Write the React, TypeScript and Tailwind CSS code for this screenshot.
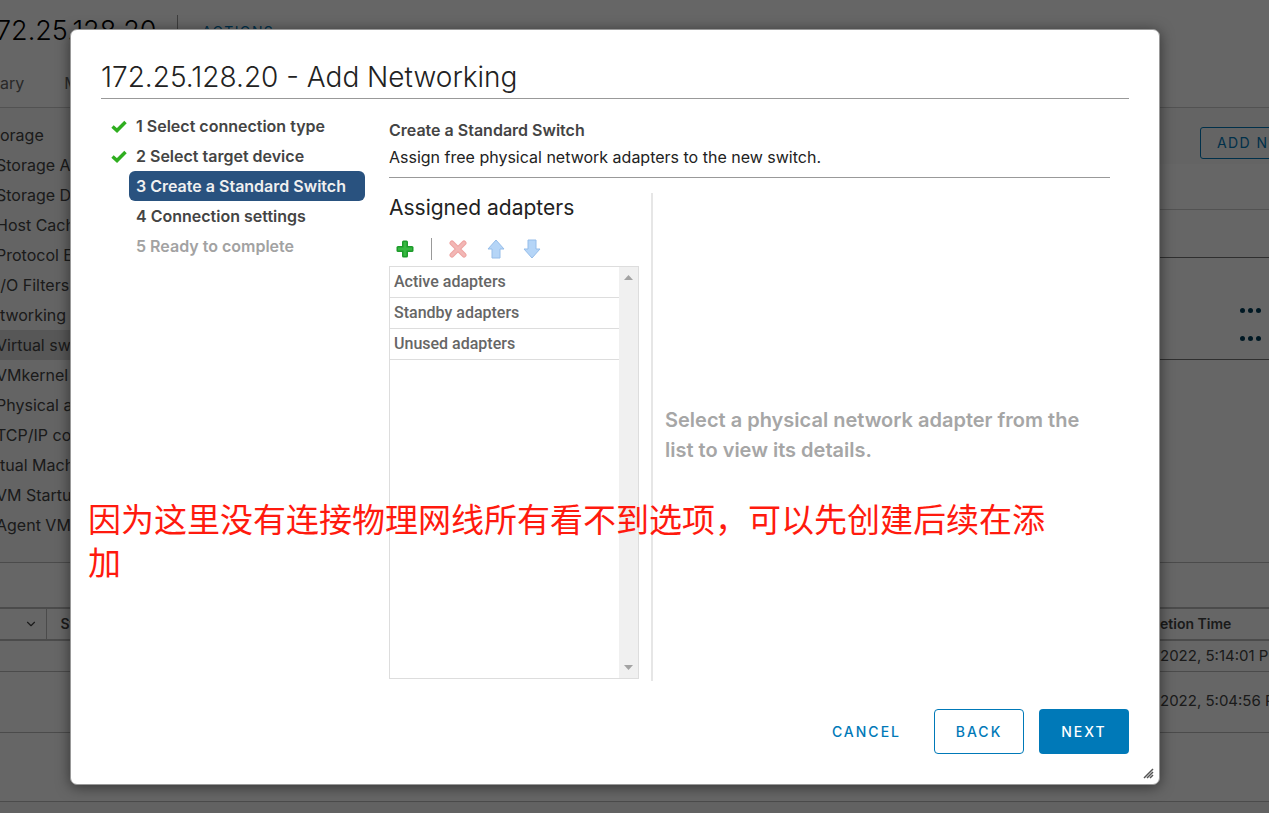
import { ChevronDown } from 'lucide-react'

const navItems = [
  { label: 'orage', group: true },
  { label: 'Storage Adapters' },
  { label: 'Storage Devices' },
  { label: 'Host Cache Configuration' },
  { label: 'Protocol Endpoints' },
  { label: 'I/O Filters' },
  { label: 'tworking', group: true },
  { label: 'Virtual switches', active: true },
  { label: 'VMkernel adapters' },
  { label: 'Physical adapters' },
  { label: 'TCP/IP configuration' },
  { label: 'tual Machines', group: true },
  { label: 'VM Startup/Shutdown' },
  { label: 'Agent VM Settings' },
]

const steps = [
  { label: '1 Select connection type', state: 'done' },
  { label: '2 Select target device', state: 'done' },
  { label: '3 Create a Standard Switch', state: 'current' },
  { label: '4 Connection settings', state: 'next' },
  { label: '5 Ready to complete', state: 'disabled' },
]

const stepStyles: Record<string, string> = {
  done: 'text-[#444]',
  current: 'bg-[#29527f] text-[#f0f0f0]',
  next: 'text-[#444]',
  disabled: 'text-[#a2a2a2]',
}

const adapterGroups = ['Active adapters', 'Standby adapters', 'Unused adapters']

function MoreButton() {
  return (
    <button aria-label="More actions" className="flex h-7 items-center gap-[3px]">
      <span className="size-[5px] rounded-full bg-[#003d59]" />
      <span className="size-[5px] rounded-full bg-[#003d59]" />
      <span className="size-[5px] rounded-full bg-[#003d59]" />
    </button>
  )
}

function HostPage() {
  return (
    <div className="flex min-h-screen flex-col bg-white text-[#444]">
      <header className="h-[108px] overflow-hidden border-b border-[#ccc] whitespace-nowrap">
        <div className="flex h-[62px] items-center">
          <h1 className="-ml-1 w-[182px] border-r border-[#999] text-[27px] leading-8 font-light text-black">
            72.25.128.20
          </h1>
          <button className="ml-6 flex items-center gap-2 text-[14px] tracking-widest text-[#0079b8]">
            ACTIONS <ChevronDown size={12} />
          </button>
        </div>
        <nav className="flex h-[42px] items-center gap-10 text-base text-[#666]">
          <a href="#summary">ary</a>
          <a href="#monitor">Monitor</a>
        </nav>
      </header>

      <div className="flex h-[455px] border-b border-[#bbb]">
        <nav className="w-[100px] overflow-hidden bg-[#fafafa] pt-3 text-base">
          {navItems.map((item) => (
            <a
              key={item.label}
              href="#configure"
              className={`block h-[30px] leading-[30px] whitespace-nowrap ${item.active ? 'bg-[#d9d9d9]' : ''}`}
            >
              <span className={item.group ? '' : '-ml-1'}>{item.label}</span>
            </a>
          ))}
        </nav>
        <main className="flex-1">
          <div className="flex h-14 items-center justify-end overflow-hidden bg-[#fafafa] pt-[14px]">
            <button className="-mr-20 h-8 w-[149px] shrink-0 rounded-[3px] border border-[#0079b8] pb-[2px] pl-4 text-left text-[14px] tracking-widest whitespace-nowrap text-[#0079b8]">
              ADD NETWORKING
            </button>
          </div>
          <div className="h-[46px] border-b border-[#ccc]" />
          <div className="h-12 border-b border-[#777]" />
          <div className="flex h-[102px] flex-col items-end justify-end border-b border-[#777] pr-2 pb-[7px]">
            <MoreButton />
            <MoreButton />
          </div>
        </main>
      </div>

      <table className="mt-11 w-full table-fixed border-t-2 border-b border-[#bbb] text-left text-[15px]">
        <thead>
          <tr className="h-8 border-b-2 border-[#bbb] text-[14px]">
            <th className="w-[46px] border-r border-[#bbb] pl-6">
              <ChevronDown size={14} />
            </th>
            <th className="pb-[2px] pl-[14px] font-semibold">Status</th>
            <th className="w-[109px] pb-[2px] font-semibold whitespace-nowrap">etion Time</th>
          </tr>
        </thead>
        <tbody>
          <tr className="h-[31px] border-b border-[#bbb]">
            <td />
            <td />
            <td className="overflow-hidden whitespace-nowrap">2022, 5:14:01 PM</td>
          </tr>
          <tr className="h-[61px]">
            <td />
            <td />
            <td className="overflow-hidden whitespace-nowrap">2022, 5:04:56 PM</td>
          </tr>
        </tbody>
      </table>
      <footer className="mt-auto h-3 border-t border-[#bbb] bg-[#f4f4f4]" />
    </div>
  )
}

function Steps() {
  return (
    <ol className="w-72 shrink-0 pt-3 text-base font-semibold">
      {steps.map((step) => (
        <li key={step.label} className="flex h-[30px] items-center">
          <span className="flex w-7 justify-center pl-2">
            {step.state === 'done' && (
              <svg width="16" height="13" viewBox="0 0 16 13">
                <path d="M1.500 6.500L6 10.500L14.500 2" fill="none" stroke="#2fae1f" strokeWidth="3.500" />
              </svg>
            )}
          </span>
          <button
            disabled={step.state === 'disabled'}
            className={`h-[30px] w-[236px] rounded-md pl-[7px] text-left whitespace-nowrap ${stepStyles[step.state]}`}
          >
            {step.label}
          </button>
        </li>
      ))}
    </ol>
  )
}

function Toolbar() {
  return (
    <div className="flex h-[35px] items-center pl-[6px]">
      <button aria-label="Add adapters">
        <svg width="20" height="20" viewBox="0 0 20 20">
          <rect x="7" y="1.500" width="6" height="17" rx="1.500" fill="#1d9a2b" />
          <rect x="1.500" y="7" width="17" height="6" rx="1.500" fill="#1d9a2b" />
          <path d="M8.500 3h3v5.500H17v3h-5.500V17h-3v-5.500H3v-3h5.500z" fill="#36b840" />
        </svg>
      </button>
      <span className="mr-4 ml-4 h-[22px] w-px bg-[#999]" />
      <button aria-label="Remove selected" disabled>
        <svg width="20" height="20" viewBox="0 0 20 20">
          <path d="M4 4l12 12M16 4L4 16" stroke="#eea3a1" strokeWidth="5" strokeLinecap="round" />
          <path d="M4 4l12 12M16 4L4 16" stroke="#f2b7b5" strokeWidth="3" strokeLinecap="round" />
        </svg>
      </button>
      <button aria-label="Move up" disabled className="ml-[18px]">
        <svg width="20" height="20" viewBox="0 0 20 20">
          <path d="M10 1l8 9h-4v9H6v-9H2z" fill="#b5d5f7" stroke="#96bde9" strokeLinejoin="round" />
        </svg>
      </button>
      <button aria-label="Move down" disabled className="ml-4">
        <svg width="20" height="20" viewBox="0 0 20 20">
          <path d="M10 19l8-9h-4V1H6v9H2z" fill="#b5d5f7" stroke="#96bde9" strokeLinejoin="round" />
        </svg>
      </button>
    </div>
  )
}

function AdapterList() {
  return (
    <div className="flex flex-1 border border-[#ddd]">
      <ul className="flex-1 font-['Roboto',sans-serif] text-base font-medium text-[#666]">
        {adapterGroups.map((group) => (
          <li key={group} className="h-[31px] border-b border-[#ddd] pl-1 leading-[30px]">
            {group}
          </li>
        ))}
      </ul>
      <div className="flex w-[19px] flex-col items-center justify-between bg-[#f0f0f0] py-2">
        <svg width="9" height="5" viewBox="0 0 9 5">
          <path d="M0 5L4.500 0L9 5z" fill="#a3a3a3" />
        </svg>
        <svg width="9" height="5" viewBox="0 0 9 5">
          <path d="M0 0L4.500 5L9 0z" fill="#a3a3a3" />
        </svg>
      </div>
    </div>
  )
}

function AddNetworkingDialog() {
  return (
    <div
      role="dialog"
      aria-labelledby="wizard-title"
      className="relative flex flex-1 flex-col rounded-[7px] border border-[#999] bg-white px-[30px] pb-[30px] text-[#222] shadow-[0_2px_14px_rgba(0,0,0,0.5)]"
    >
      <h2 id="wizard-title" className="h-[69px] border-b border-[#999] pt-[31px] text-[28px] leading-8 font-light">
        172.25.128.20 - Add Networking
      </h2>

      <div className="flex flex-1">
        <Steps />
        <section className="mr-[19px] flex flex-1 flex-col">
          <div className="h-[79px] border-b border-[#999] pt-[18px] leading-[27px]">
            <h3 className="font-semibold text-[#444]">Create a Standard Switch</h3>
            <p>Assign free physical network adapters to the new switch.</p>
          </div>
          <div className="mt-[15px] flex flex-1">
            <div className="flex w-[264px] shrink-0 flex-col border-r-2 border-[#e6e6e6] pr-3 pb-[2px]">
              <h4 className="mb-[9px] text-[21px] leading-[29px]">Assigned adapters</h4>
              <Toolbar />
              <AdapterList />
            </div>
            <div className="flex flex-1 items-center pb-1 pl-3 text-[20px] leading-[30px] font-semibold text-[#a6a6a6]">
              <p>
                Select a physical network adapter from the
                <br />
                list to view its details.
              </p>
            </div>
          </div>
        </section>
      </div>

      <div className="mt-7 flex justify-end gap-[15px] text-[14px] font-medium tracking-[2px]">
        <button className="h-[45px] px-[18px] text-[#0079b8]">CANCEL</button>
        <button className="h-[45px] w-[90px] rounded-[4px] border border-[#0079b8] text-[#0079b8]">BACK</button>
        <button className="h-[45px] w-[90px] rounded-[4px] bg-[#0079b8] text-white">NEXT</button>
      </div>

      <svg className="absolute right-[5px] bottom-[5px]" width="11" height="11" viewBox="0 0 11 11">
        <path d="M1 10L10 1M4 10L10 4M7 10L10 7" stroke="#555" strokeWidth="1.500" />
      </svg>
    </div>
  )
}

export default function App() {
  return (
    <div className="relative min-h-screen overflow-hidden font-['Inter',sans-serif]">
      <HostPage />
      <div className="absolute inset-0 flex bg-black/60 pt-[29px] pr-[109px] pb-7 pl-[70px]">
        <AddNetworkingDialog />
      </div>
      <p className="absolute top-[497px] left-[88px] w-[970px] font-['Noto_Sans_CJK_SC',sans-serif] text-[33px] leading-[43px] text-[#ff1a0e]">
        因为这里没有连接物理网线所有看不到选项，可以先创建后续在添加
      </p>
    </div>
  )
}
